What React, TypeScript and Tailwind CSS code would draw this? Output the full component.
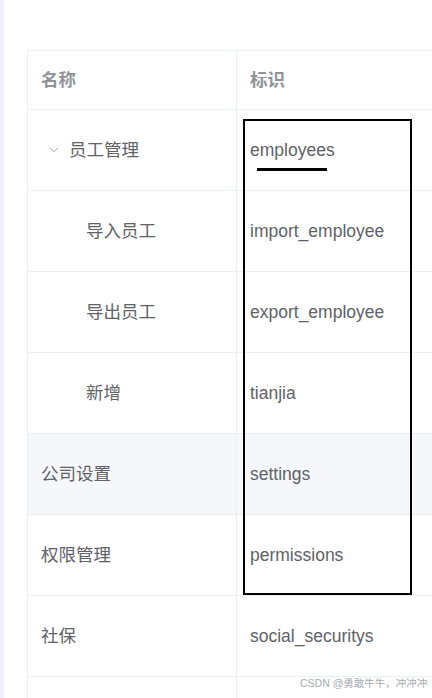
import { ChevronDown } from "lucide-react";

type Row = {
  name: string;
  code: string;
  level: 0 | 1;
  expandable?: boolean;
  hover?: boolean;
};

const rows: Row[] = [
  { name: "员工管理", code: "employees", level: 0, expandable: true },
  { name: "导入员工", code: "import_employee", level: 1 },
  { name: "导出员工", code: "export_employee", level: 1 },
  { name: "新增", code: "tianjia", level: 1 },
  { name: "公司设置", code: "settings", level: 0, hover: true },
  { name: "权限管理", code: "permissions", level: 0 },
  { name: "社保", code: "social_securitys", level: 0 },
  { name: "", code: "", level: 0 },
];

const font = {
  fontFamily: '"Liberation Sans", Arial, "Noto Sans CJK SC", sans-serif',
};

export default function App() {
  return (
    <div className="relative flex h-[698px] w-[432px] overflow-hidden bg-white" style={font}>
      <div className="w-[4px] shrink-0 bg-[#eef0f5]" />
      <div className="flex-1 pl-[23px] pt-[50px]">
        <div className="w-[460px] border-l border-t border-[#ebeef5]">
          <div className="flex h-[59px] border-b border-[#ebeef5] text-[17.5px] font-bold text-[#909399]">
            <div className="flex w-[209px] shrink-0 items-center border-r border-[#ebeef5] pl-[13px]">
              名称
            </div>
            <div className="flex flex-1 items-center pl-[13px]">标识</div>
          </div>

          {rows.map((row, i) => (
            <div
              key={i}
              className={`flex h-[81px] border-b border-[#ebeef5] text-[17.5px] text-[#606266] ${
                row.hover ? "bg-[#f5f7fa]" : "bg-white"
              }`}
            >
              <div className="flex w-[209px] shrink-0 items-center border-r border-[#ebeef5] pl-[13px]">
                {row.expandable ? (
                  <ChevronDown className="ml-[6px] mr-[8px] h-[14px] w-[14px] text-[#909399]" strokeWidth={1.5} />
                ) : null}
                <span className={row.level === 1 ? "pl-[45px]" : ""}>{row.name}</span>
              </div>
              <div className="flex flex-1 items-center pl-[13px]">{row.code}</div>
            </div>
          ))}
        </div>
      </div>

      {/* annotation drawn over the screenshot */}
      <div className="absolute left-[243px] top-[119px] h-[476px] w-[169px] border-2 border-black" />
      <div className="absolute left-[257px] top-[168px] h-[3px] w-[70px] bg-black" />

      <div className="absolute left-[300px] top-[676px] whitespace-nowrap text-[10.5px] text-[#a8abb2]">
        CSDN @勇敢牛牛，冲冲冲
      </div>
    </div>
  );
}
